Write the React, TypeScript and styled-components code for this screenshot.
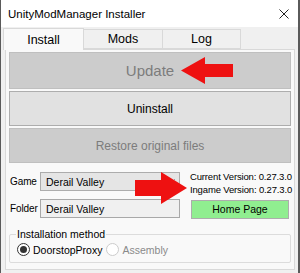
import React from "react";
import styled, { createGlobalStyle } from "styled-components";

const Global = createGlobalStyle`
  html, body { margin: 0; padding: 0; background: #ffffff; }
  * { box-sizing: border-box; }
`;

const Window = styled.div`
  position: relative;
  width: 300px;
  height: 273px;
  background: #f0f0f0;
  border-left: 1px solid #5a5a5a;
  border-right: 2px solid #5a5a5a;
  font-family: "Liberation Sans", Arial, sans-serif;
  color: #000;
  display: flex;
  flex-direction: column;
  overflow: hidden;
  white-space: nowrap;
`;

const TitleBar = styled.div`
  height: 27px;
  flex-shrink: 0;
  background: #ffffff;
  display: flex;
  align-items: center;
  justify-content: space-between;
  padding: 0 9px 0 7px;
  font-size: 11.5px;
`;

const CloseIcon = styled.svg`
  width: 10px;
  height: 10px;
`;

const Body = styled.div`
  flex: 1;
  padding: 0 3px 3px 2px;
  display: flex;
  flex-direction: column;
`;

const TabStrip = styled.div`
  height: 22px;
  display: flex;
  align-items: flex-end;
`;

const Tab = styled.div<{ $active?: boolean; $w: number }>`
  width: ${(p) => p.$w}px;
  height: ${(p) => (p.$active ? 22 : 20)}px;
  margin-bottom: ${(p) => (p.$active ? -1 : 0)}px;
  background: ${(p) => (p.$active ? "#f9f9f9" : "#f0f0f0")};
  border: 1px solid #d9d9d9;
  border-bottom: ${(p) => (p.$active ? "none" : "1px solid #d9d9d9")};
  margin-left: ${(p) => (p.$active ? 0 : -1)}px;
  display: flex;
  align-items: center;
  justify-content: center;
  font-size: 12.5px;
  position: relative;
  z-index: ${(p) => (p.$active ? 1 : 0)};
`;

const Panel = styled.div`
  flex: 1;
  margin-left: 2px;
  background: #f9f9f9;
  border: 1px solid #d9d9d9;
  padding: 2px 3px 6px 3px;
  display: flex;
  flex-direction: column;
  gap: 2px;
`;

const BigButton = styled.div<{ $h: number; $disabled?: boolean; $size: number }>`
  height: ${(p) => p.$h}px;
  flex-shrink: 0;
  background: ${(p) => (p.$disabled ? "#cccccc" : "#e1e1e1")};
  border: 1px solid ${(p) => (p.$disabled ? "#bfbfbf" : "#adadad")};
  color: ${(p) => (p.$disabled ? "#7c7c7c" : "#000")};
  font-size: ${(p) => p.$size}px;
  display: flex;
  align-items: center;
  justify-content: center;
`;

const InfoRow = styled.div`
  display: flex;
  gap: 10px;
  margin-top: 7px;
`;

const FieldCol = styled.div`
  display: flex;
  flex-direction: column;
  gap: 8px;
  padding-left: 1px;
  flex-shrink: 0;
`;

const Field = styled.div`
  display: flex;
  align-items: center;
  font-size: 10px;
`;

const Label = styled.span`
  width: 30px;
  letter-spacing: -0.1px;
`;

const Box = styled.div<{ $select?: boolean }>`
  width: 140px;
  height: 19px;
  background: ${(p) => (p.$select ? "#e5e5e5" : "#f0f0f0")};
  border: 1px solid ${(p) => (p.$select ? "#acacac" : "#a8a8a8")};
  display: flex;
  align-items: center;
  justify-content: space-between;
  padding: 0 4px 0 5px;
  font-size: 10.5px;
`;

const Chevron = styled.svg`
  width: 8px;
  height: 5px;
`;

const VersionCol = styled.div`
  display: flex;
  flex-direction: column;
  font-size: 9.5px;
  letter-spacing: -0.15px;
  line-height: 13px;
  margin-top: -2px;
`;

const HomeButton = styled.div`
  margin-top: 4px;
  margin-left: 1px;
  width: 98px;
  height: 19px;
  background: #90ee90;
  border: 1px solid #adadad;
  display: flex;
  align-items: center;
  justify-content: center;
  font-size: 10.5px;
  letter-spacing: 0;
`;

const Group = styled.fieldset`
  margin: 7px 0 0 0;
  border: 1px solid #dcdcdc;
  border-radius: 2px;
  padding: 3px 8px 6px 7px;
  display: flex;
  align-items: center;
  gap: 4px;
  font-size: 10.5px;
`;

const Legend = styled.legend`
  padding: 0 1px;
  margin-left: -1px;
  font-size: 10.5px;
`;

const Radio = styled.label<{ $disabled?: boolean }>`
  display: flex;
  align-items: center;
  gap: 3px;
  color: ${(p) => (p.$disabled ? "#8a8a8a" : "#000")};
`;

const Dot = styled.span<{ $checked?: boolean; $disabled?: boolean }>`
  width: 13px;
  height: 13px;
  border-radius: 50%;
  border: 1px solid ${(p) => (p.$disabled ? "#cccccc" : "#333")};
  background: #fff;
  display: flex;
  align-items: center;
  justify-content: center;
  &::after {
    content: "";
    display: ${(p) => (p.$checked ? "block" : "none")};
    width: 7px;
    height: 7px;
    border-radius: 50%;
    background: #333;
  }
`;

const Arrow = styled.svg<{ $x: number; $y: number }>`
  position: absolute;
  left: ${(p) => p.$x}px;
  top: ${(p) => p.$y}px;
`;

export default function App() {
  return (
    <>
      <Global />
      <Window>
        <TitleBar>
          <span>UnityModManager Installer</span>
          <CloseIcon viewBox="0 0 10 10">
            <path d="M0.5 0.5 L9.5 9.5 M9.5 0.5 L0.5 9.5" stroke="#222" strokeWidth="1" />
          </CloseIcon>
        </TitleBar>
        <Body>
          <TabStrip>
            <Tab $active $w={81}>Install</Tab>
            <Tab $w={80}>Mods</Tab>
            <Tab $w={79}>Log</Tab>
          </TabStrip>
          <Panel>
            <BigButton $h={37} $disabled $size={15}>Update</BigButton>
            <BigButton $h={35} $size={12}>Uninstall</BigButton>
            <BigButton $h={35} $disabled $size={12}>Restore original files</BigButton>
            <InfoRow>
              <FieldCol>
                <Field>
                  <Label>Game</Label>
                  <Box $select>
                    <span>Derail Valley</span>
                    <Chevron viewBox="0 0 8 5">
                      <path d="M0.5 0.5 L4 4 L7.5 0.5" fill="none" stroke="#555" strokeWidth="1" />
                    </Chevron>
                  </Box>
                </Field>
                <Field>
                  <Label>Folder</Label>
                  <Box>
                    <span>Derail Valley</span>
                  </Box>
                </Field>
              </FieldCol>
              <VersionCol>
                <span>Current Version: 0.27.3.0</span>
                <span>Ingame Version: 0.27.3.0</span>
                <HomeButton>Home Page</HomeButton>
              </VersionCol>
            </InfoRow>
            <Group>
              <Legend>Installation method</Legend>
              <Radio>
                <Dot $checked />
                DoorstopProxy
              </Radio>
              <Radio $disabled>
                <Dot $disabled />
                Assembly
              </Radio>
            </Group>
          </Panel>
        </Body>
        <Arrow $x={180} $y={57} width="52" height="27" viewBox="0 0 52 27">
          <polygon points="0,13.5 24,0 24,7 52,7 52,20 24,20 24,27" fill="#ee1111" />
        </Arrow>
        <Arrow $x={134} $y={172} width="52" height="32" viewBox="0 0 52 32">
          <polygon points="52,16 26,0 26,8 0,8 0,24 26,24 26,32" fill="#ee1111" />
        </Arrow>
      </Window>
    </>
  );
}
